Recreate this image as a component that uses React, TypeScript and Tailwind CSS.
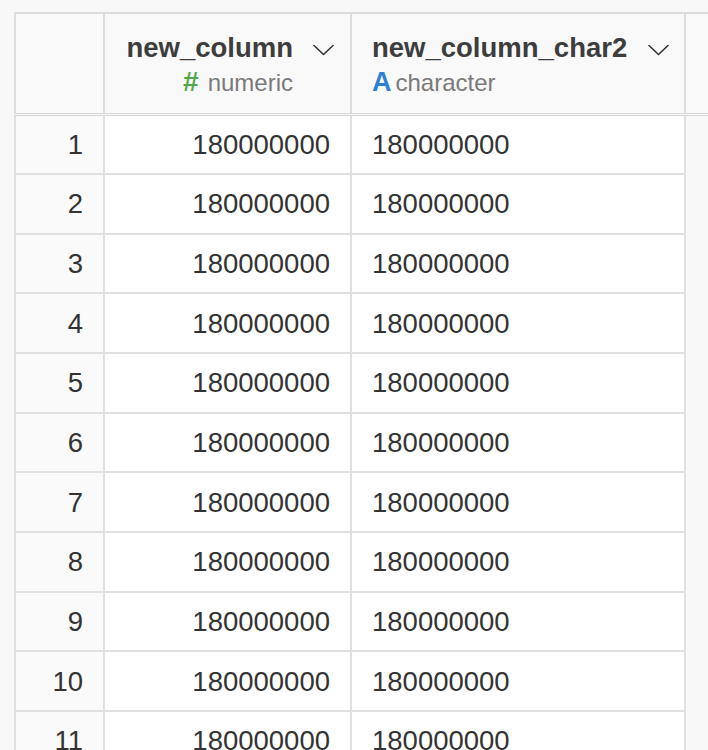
import React from "react";

const Chevron = () => (
  <svg width="21" height="12" viewBox="0 0 21 12" fill="none" className="shrink-0">
    <path d="M1 1.5 L10.5 10.5 L20 1.5" stroke="#333" strokeWidth="1.6" strokeLinecap="round" strokeLinejoin="round" />
  </svg>
);

const rows = Array.from({ length: 12 }, (_, i) => i + 1);

export default function App() {
  return (
    <div
      className="h-[750px] w-[708px] overflow-hidden bg-[#f8f8f8] pl-[14px] pt-[12px]"
      style={{ fontFamily: '"Liberation Sans", Arial, sans-serif' }}
    >
      <div className="border-t-2 border-[#dcdcdc]">
        {/* header */}
        <div className="flex h-[101.5px] border-b-[3px] border-double border-[#d6d6d6]">
          <div className="w-[91px] shrink-0 border-l-2 border-r-2 border-[#dcdcdc] bg-[#fafafa]" />
          <div className="flex w-[247px] shrink-0 items-start justify-end border-r-2 border-[#dcdcdc] bg-[#f9f9f9] pr-[16px] pt-[19px]">
            <div className="flex flex-col items-end">
              <div className="text-[27.5px] font-bold leading-[30px] text-[#3d3d3d]">new_column</div>
              <div className="mt-[5px] flex items-baseline text-[24px] leading-[28px] text-[#7a7a7a]">
                <span className="mr-[9px] text-[28px] font-bold leading-[28px] text-[#4fa84c]">#</span>
                <span>numeric</span>
              </div>
            </div>
            <div className="ml-[20px] mt-[11px]">
              <Chevron />
            </div>
          </div>
          <div className="flex w-[334px] shrink-0 items-start justify-between border-r-2 border-[#dcdcdc] bg-[#f9f9f9] pl-[20px] pr-[15px] pt-[19px]">
            <div className="flex flex-col items-start">
              <div className="text-[27.5px] font-bold leading-[30px] text-[#3d3d3d]">new_column_char2</div>
              <div className="mt-[5px] flex items-baseline text-[24px] leading-[28px] text-[#7a7a7a]">
                <span className="mr-[4px] text-[27px] font-bold leading-[28px] text-[#2f80d3]">A</span>
                <span>character</span>
              </div>
            </div>
            <div className="mt-[11px]">
              <Chevron />
            </div>
          </div>
          <div className="flex-1 bg-[#f9f9f9]" />
        </div>
        {/* body */}
        {rows.map((n) => (
          <div key={n} className="flex h-[59.67px] text-[27.5px] text-[#333]">
            <div className="flex w-[91px] shrink-0 items-center justify-end border-b-2 border-l-2 border-r-2 border-[#e0e0e0] bg-[#fafafa] pr-[20px]">
              {n}
            </div>
            <div className="flex w-[247px] shrink-0 items-center justify-end border-b-2 border-r-2 border-[#e0e0e0] bg-white pr-[20px]">
              180000000
            </div>
            <div className="flex w-[334px] shrink-0 items-center border-b-2 border-r-2 border-[#e0e0e0] bg-white pl-[20px]">
              180000000
            </div>
          </div>
        ))}
      </div>
    </div>
  );
}
